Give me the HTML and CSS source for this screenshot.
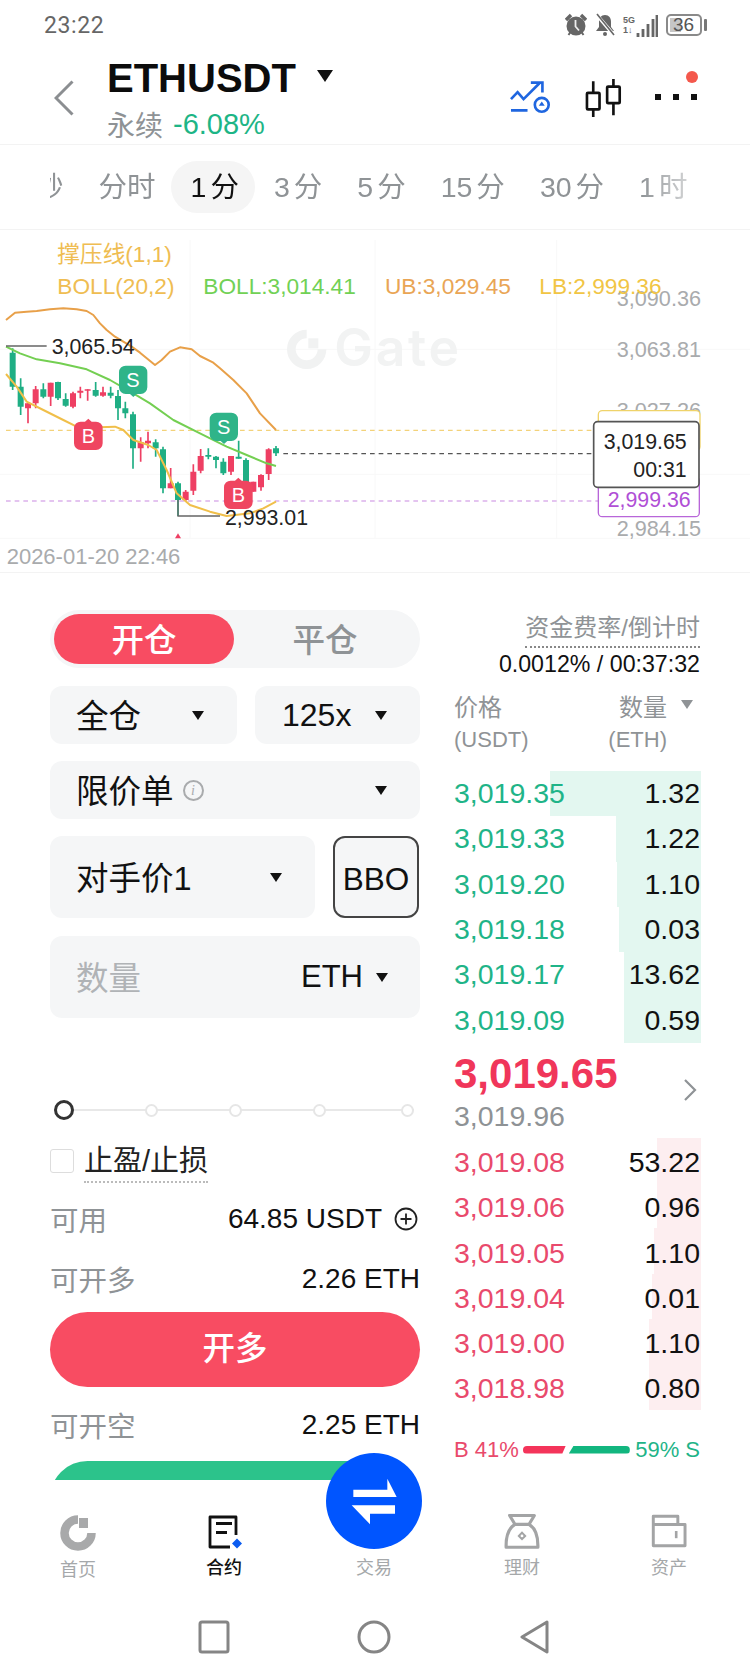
FILE: index.html
```html
<!DOCTYPE html>
<html lang="zh">
<head>
<meta charset="utf-8">
<title>ETHUSDT</title>
<link rel="stylesheet" href="styles.css">
</head>
<body>
<div class="page">
  <div class="status">
    <span class="time">23:22</span>
    <div class="status-icons">
      <svg class="ic-alarm" viewBox="0 0 22 24"><circle cx="11" cy="13" r="9.5" fill="#666"/><path d="M1 7l5-5M21 7l-5-5" stroke="#666" stroke-width="3.4" fill="none"/><path d="M3.5 22l2-3M18.5 22l-2-3" stroke="#666" stroke-width="2"/><path d="M10.5 7v6.5l3.5 4" stroke="#eee" stroke-width="1.8" fill="none"/></svg>
      <svg class="ic-bell" viewBox="0 0 20 24"><path d="M10 2c-4 0-6 3-6 7v5l-3 4h18l-3-4V9c0-4-2-7-6-7z" fill="#666"/><circle cx="10" cy="21" r="2" fill="#666"/><path d="M1 1l18 21" stroke="#fff" stroke-width="3.5"/><path d="M2 1l17 21" stroke="#666" stroke-width="1.6"/></svg>
      <div class="net"><span class="net-5g">5G</span><span class="net-arrows">1↓</span></div>
      <svg class="ic-bars" viewBox="0 0 22 24"><path d="M2 24v-4M7 24v-8M12 24v-13M17 24V6M21 24V2" stroke="#666" stroke-width="2.800"/></svg>
      <div class="battery"><span class="battery-level">36</span></div>
      <span class="battery-nub"></span>
    </div>
  </div>

  <header class="header">
    <svg class="back" viewBox="0 0 20 36"><path d="M18.500 1.500L2 18l16.500 16.500" fill="none" stroke="#8b8e91" stroke-width="3"/></svg>
    <div class="title-col">
      <div class="title-line"><span class="title">ETHUSDT</span><span class="caret caret-title"></span></div>
      <div class="sub-line"><span class="sub-kind">永续</span><span class="sub-pct">-6.08%</span></div>
    </div>
    <div class="header-icons">
      <svg class="ic-blue" viewBox="20 55 145 110"><path d="M32 118l20-21 18 21 48-48M92 68h35v30M32 152h50" fill="none" stroke="#1f66e0" stroke-width="8"/><circle cx="125" cy="135" r="21" fill="none" stroke="#1f66e0" stroke-width="8"/><path d="M125 125l9 13h-18z" fill="#1f66e0"/></svg>
      <svg class="ic-candle" viewBox="245 50 130 125"><path d="M279 62v35M279 147v23M340 55v23M340 128v37" stroke="#111" stroke-width="8"/><rect x="260" y="97" width="38" height="50" rx="3" fill="none" stroke="#111" stroke-width="8"/><rect x="321" y="78" width="38" height="50" rx="3" fill="none" stroke="#111" stroke-width="8"/></svg>
      <div class="more">
        <span class="more-dot"></span><span class="more-dot"></span><span class="more-dot"></span>
        <span class="more-badge"></span>
      </div>
    </div>
  </header>

  <nav class="tabs">
    <div class="tabs-track">
      <span class="tab tab-first">秒</span>
      <span class="tab">分时</span>
      <span class="tab tab-active"><b>1</b>分</span>
      <span class="tab"><b>3</b>分</span>
      <span class="tab"><b>5</b>分</span>
      <span class="tab"><b>15</b>分</span>
      <span class="tab"><b>30</b>分</span>
      <span class="tab"><b>1</b>时</span>
    </div>
  </nav>

  <section class="chart">
    <svg class="chart-svg" viewBox="0 0 2250 1026">
      <path class="grid" d="M0 358H2250M0 733H2250M0 925H2250M570 30V925M1125 30V925M1670 30V925"/>
      <g class="wm">
        <path d="M920 312a46 46 0 1 0 46 46" fill="none" stroke="#f1f2f2" stroke-width="26"/>
        <rect x="925" y="325" width="30" height="30" fill="#f1f2f2"/>
        <text class="wm-text" x="1003" y="408">Gate</text>
      </g>
      <text class="t-legend c-yel" x="172" y="97">撑压线(1,1)</text>
      <text class="t-legend c-yel" x="172" y="193">BOLL(20,2)</text>
      <text class="t-legend c-grn" x="610" y="193">BOLL:3,014.41</text>
      <text class="t-legend c-org" x="1155" y="193">UB:3,029.45</text>
      <text class="t-axis" x="2103" y="229">3,090.36</text>
      <text class="t-legend c-lb" x="1618" y="193">LB:2,999.36</text>
      <text class="t-axis" x="2103" y="382">3,063.81</text>
      <text class="t-axis" x="2103" y="564">3,027.26</text>
      <text class="t-axis" x="2103" y="917">2,984.15</text>
      <path class="dash dash-y" d="M18 601H1795"/>
      <path class="dash dash-p" d="M18 813H1795"/>
      <path class="dash dash-k" d="M850 671H1780"/>
      <rect class="box-y" x="1795" y="542" width="305" height="120" rx="12"/>
      <rect class="box-p" x="1795" y="740" width="303" height="120" rx="12"/>
      <text class="t-purple" x="2072" y="832">2,999.36</text>
      <path class="w-g" d="M38 355V480M62 445V555M130 460V505M174 455V510M197 490V530M287 456V500M332 470V505M354 480V570M376 515V565M399 545V716M467 628V680M489 650V790M534 755V858M625 655V688M648 678V715M670 685V735M716 632V686M738 685V775M828 648V678"/>
      <path class="b-g" d="M38 368V470M62 470V530M130 478V500M174 456V505M197 507V527M287 480V497M332 488V497M354 498V535M376 535V550M399 553V655M467 637V655M489 658V775M534 760V810M625 675V680M648 680V690M670 695V730M716 680V686M738 690V760M828 655V670"/>
      <path class="w-r" d="M84 520V580M107 468V535M152 458V528M219 485V535M241 470V505M263 478V512M309 470V500M422 622V695M444 605V655M512 714V775M557 780V815M580 703V795M602 657V730M693 678V735M760 755V785M783 733V782M806 655V750"/>
      <path class="b-r" d="M84 520V535M107 478V520M152 458V500M219 490V530M241 482V488M263 478V482M309 487V497M422 636V655M444 632V640M512 760V775M557 785V810M580 725V782M602 678V722M693 678V725M760 755V785M783 735V772M806 658V732"/>
      <path class="l-org" d="M18 270L45 248 80 245 110 243 150 238 190 235 230 238 260 243 280 255 300 280 320 300 345 320 370 335 395 350 420 368 465 405 485 390 510 365 540 352 575 358 600 378 640 398 660 415 700 450 740 490 780 550 828 600"/>
      <path class="l-grn" d="M18 350L60 370 110 388 180 400 260 418 330 450 400 490 450 520 520 570 600 610 680 650 740 675 800 700 828 708"/>
      <path class="l-yel" d="M18 432L50 470 80 515 130 540 190 570 230 590 300 592 345 590 370 600 400 630 445 645 470 660 485 690 500 720 530 790 570 825 630 845 680 858 750 850 790 835 828 815"/>
      <path class="hl" d="M18 348H140M534 810V858H660"/>
      <text class="t-ext" x="155" y="373">3,065.54</text>
      <text class="t-ext" x="675" y="885">2,993.01</text>
      <path class="tri-r" d="M534 910l9 15h-18z"/>
      <g>
        <path class="mk-g" d="M377 407h45a20 20 0 0 1 20 20v45a20 20 0 0 1-20 20h-12l-10 9-10-9h-13a20 20 0 0 1-20-20v-45a20 20 0 0 1 20-20z"/>
        <text class="t-mk" x="399" y="472">S</text>
        <path class="mk-g" d="M649 548h45a20 20 0 0 1 20 20v45a20 20 0 0 1-20 20h-12l-10 9-10-9h-13a20 20 0 0 1-20-20v-45a20 20 0 0 1 20-20z"/>
        <text class="t-mk" x="671" y="613">S</text>
        <path class="mk-r" d="M242 575h13l10-9 10 9h13a20 20 0 0 1 20 20v45a20 20 0 0 1-20 20h-46a20 20 0 0 1-20-20v-45a20 20 0 0 1 20-20z"/>
        <text class="t-mk" x="265" y="640">B</text>
        <path class="mk-r" d="M692 752h13l10-9 10 9h13a20 20 0 0 1 20 20v45a20 20 0 0 1-20 20h-46a20 20 0 0 1-20-20v-45a20 20 0 0 1 20-20z"/>
        <text class="t-mk" x="715" y="816">B</text>
      </g>
      <rect class="box-k" x="1781" y="575" width="316" height="197" rx="12"/>
      <text class="t-price" x="2060" y="657">3,019.65</text>
      <text class="t-price" x="2060" y="741">00:31</text>
      <text class="t-date" x="20" y="1003">2026-01-20 22:46</text>
    </svg>
  </section>

  <main class="trade">
    <div class="form">
      <div class="segment">
        <span class="seg seg-active">开仓</span>
        <span class="seg">平仓</span>
      </div>
      <div class="row-split">
        <div class="select select-mode"><span class="cjk">全仓</span><span class="caret"></span></div>
        <div class="select select-lev"><span>125x</span><span class="caret"></span></div>
      </div>
      <div class="select select-type">
        <span class="with-info"><span class="cjk">限价单</span><span class="info">i</span></span><span class="caret"></span>
      </div>
      <div class="row-price">
        <div class="select select-tall select-price"><span class="cjk">对手价1</span><span class="caret"></span></div>
        <div class="bbo">BBO</div>
      </div>
      <div class="select select-tall select-qty">
        <span class="placeholder cjk">数量</span>
        <span class="unit">ETH<span class="caret"></span></span>
      </div>
      <div class="slider">
        <span class="knob"></span><span class="stop"></span><span class="stop"></span><span class="stop"></span><span class="stop stop-last"></span>
      </div>
      <div class="tpsl">
        <span class="check"></span><span class="tpsl-label">止盈/止损</span>
      </div>
      <div class="kv kv-avail"><span class="k">可用</span><span class="v">64.85 USDT<svg class="ic-plus" viewBox="0 0 24 24"><circle cx="12" cy="12" r="10.500" fill="none" stroke="#222" stroke-width="1.800"/><path d="M12 6.500v11M6.500 12h11" stroke="#222" stroke-width="1.800"/></svg></span></div>
      <div class="kv"><span class="k">可开多</span><span class="v">2.26 ETH</span></div>
      <div class="action action-long">开多</div>
      <div class="kv kv-short"><span class="k">可开空</span><span class="v">2.25 ETH</span></div>
      <div class="action action-short"></div>
    </div>

    <aside class="book">
      <div class="funding"><span class="funding-label">资金费率/倒计时</span></div>
      <div class="funding-value">0.0012% / 00:37:32</div>
      <div class="book-head">
        <div class="book-head-col"><span>价格</span><span class="unit-line">(USDT)</span></div>
        <div class="book-head-col book-head-qty"><span class="qty-head">数量<span class="caret caret-gray"></span></span><span class="unit-line">(ETH)</span></div>
      </div>
      <div class="rows">
        <div class="bk bk-up"><i class="bar" style="width:151px"></i><span class="p">3,019.35</span><span class="q">1.32</span></div>
        <div class="bk bk-up"><i class="bar" style="width:85px"></i><span class="p">3,019.33</span><span class="q">1.22</span></div>
        <div class="bk bk-up"><i class="bar" style="width:84px"></i><span class="p">3,019.20</span><span class="q">1.10</span></div>
        <div class="bk bk-up"><i class="bar" style="width:82px"></i><span class="p">3,019.18</span><span class="q">0.03</span></div>
        <div class="bk bk-up"><i class="bar" style="width:77px"></i><span class="p">3,019.17</span><span class="q">13.62</span></div>
        <div class="bk bk-up"><i class="bar" style="width:77px"></i><span class="p">3,019.09</span><span class="q">0.59</span></div>
      </div>
      <div class="mid">
        <div class="mid-prices"><span class="mid-last">3,019.65</span><span class="mid-mark">3,019.96</span></div>
        <svg class="mid-chev" viewBox="0 0 14 24"><path d="M2 2l10 10L2 22" fill="none" stroke="#8f9396" stroke-width="2.200"/></svg>
      </div>
      <div class="rows">
        <div class="bk bk-dn"><i class="bar" style="width:44px"></i><span class="p">3,019.08</span><span class="q">53.22</span></div>
        <div class="bk bk-dn"><i class="bar" style="width:44px"></i><span class="p">3,019.06</span><span class="q">0.96</span></div>
        <div class="bk bk-dn"><i class="bar" style="width:47px"></i><span class="p">3,019.05</span><span class="q">1.10</span></div>
        <div class="bk bk-dn"><i class="bar" style="width:49px"></i><span class="p">3,019.04</span><span class="q">0.01</span></div>
        <div class="bk bk-dn"><i class="bar" style="width:52px"></i><span class="p">3,019.00</span><span class="q">1.10</span></div>
        <div class="bk bk-dn"><i class="bar" style="width:52px"></i><span class="p">3,018.98</span><span class="q">0.80</span></div>
      </div>
      <div class="ratio">
        <span class="ratio-b">B 41%</span>
        <span class="ratio-bar ratio-bar-b"></span>
        <span class="ratio-bar ratio-bar-s"></span>
        <span class="ratio-s">59% S</span>
      </div>
    </aside>
  </main>

  <footer class="tabbar">
    <div class="swap">
      <svg viewBox="858 8 288 288"><path fill="#fff" d="M940 118h102V85l28 55H940zM1065 165H935l55 57v-32h75z"/></svg>
    </div>
    <div class="nav-item nav-home">
      <svg class="nav-ic" viewBox="0 0 36 36"><path d="M18 4.500a13.500 13.500 0 1 0 13.500 13.500" fill="none" stroke="#a8a9aa" stroke-width="8.500"/><rect x="19" y="3" width="9" height="10" fill="#a8a9aa"/></svg>
      <span class="nav-label">首页</span>
    </div>
    <div class="nav-item nav-active">
      <svg class="nav-ic" viewBox="0 0 36 36"><path d="M30 22V4H4v30h20" fill="none" stroke="#111" stroke-width="2.800" stroke-linejoin="round"/><path d="M10 10.500h16M10 19.500h11" stroke="#111" stroke-width="2.800"/><path d="M31 25.500l5 5-5 5-5-5z" fill="#0b5cf0"/></svg>
      <span class="nav-label">合约</span>
    </div>
    <div class="nav-item">
      <span class="nav-spacer"></span>
      <span class="nav-label">交易</span>
    </div>
    <div class="nav-item">
      <svg class="nav-ic" viewBox="45 38 100 102"><path d="M60 45h70l-15 25H75z M75 70Q50 85 50 130v5h90v-5q0-45-25-60" fill="none" stroke="#a3a4a5" stroke-width="9" stroke-linejoin="round"/><path d="M95 90l13 13-13 13-13-13z" fill="#a3a4a5"/><circle cx="95" cy="103" r="4" fill="#fff"/></svg>
      <span class="nav-label">理财</span>
    </div>
    <div class="nav-item">
      <svg class="nav-ic" viewBox="488 40 110 100"><path d="M495 135V45h75v25h22v65zM495 70h75" fill="none" stroke="#a3a4a5" stroke-width="9" stroke-linejoin="round"/><path d="M565 90v22" stroke="#a3a4a5" stroke-width="8"/></svg>
      <span class="nav-label">资产</span>
    </div>
  </footer>

  <div class="sysnav">
    <svg class="sys-ic" viewBox="0 0 34 34"><rect x="3" y="2" width="28" height="30" rx="2" fill="none" stroke="#858585" stroke-width="3"/></svg>
    <svg class="sys-ic" viewBox="0 0 34 34"><circle cx="17" cy="17" r="15" fill="none" stroke="#858585" stroke-width="3"/></svg>
    <svg class="sys-ic" viewBox="0 0 34 34"><path d="M30 2L5 17l25 15z" fill="none" stroke="#858585" stroke-width="3" stroke-linejoin="round"/></svg>
  </div>
</div>
</body>
</html>
```
FILE: styles.css
```css
* { box-sizing: border-box; }
html, body { margin: 0; padding: 0; background: #fff; }
body { font-family: "Liberation Sans", "Noto Sans CJK SC", sans-serif; color: #111; }
.page { position: relative; width: 750px; height: 1680px; overflow: hidden; }

/* status bar */
.status { height: 50px; display: flex; align-items: center; justify-content: space-between; padding: 0 43px 0 44px; }
.time { font-family: Roboto, "Liberation Sans", sans-serif; font-size: 23px; letter-spacing: .6px; color: #666; }
.status-icons { display: flex; align-items: center; height: 24px; }
.ic-alarm { width: 22px; height: 24px; margin-right: 8px; }
.ic-bell { width: 20px; height: 24px; margin-right: 8px; }
.net { display: flex; flex-direction: column; width: 13px; margin-right: 0; line-height: 10px; font-size: 9px; font-weight: 700; color: #666; }
.net-5g, .net-arrows { white-space: nowrap; }
.ic-bars { width: 22px; height: 24px; margin-right: 8px; }
.battery { width: 36px; height: 22px; border: 2px solid #8a8a8a; border-radius: 5px; padding: 2px; display: flex; background: #fff; }
.battery-level { flex: 1; font-size: 19px; line-height: 14px; padding-left: 3px; color: #555; background: linear-gradient(90deg, #c6c6c6 38%, #fff 38%); }
.battery-nub { width: 3px; height: 12px; margin-left: 2px; background: #777; border-radius: 1px; }

/* header */
.header { height: 95px; border-bottom: 1px solid #f3f3f3; display: flex; align-items: flex-start; padding: 0 53px 0 54px; }
.back { width: 20px; height: 36px; margin-top: 30px; flex: none; }
.title-col { margin-left: 33px; }
.title-line { display: flex; align-items: center; height: 46px; margin-top: 5px; }
.title { font-size: 40px; font-weight: 700; line-height: 46px; color: #0c0c0c; }
.caret { display: inline-block; width: 0; height: 0; border-left: 6.500px solid transparent; border-right: 6.500px solid transparent; border-top: 9px solid #111; }
.caret-title { margin-left: 21px; margin-top: -4px; border-left-width: 8px; border-right-width: 8px; border-top-width: 12px; }
.sub-line { display: flex; align-items: center; height: 36px; margin-top: 5px; }
.sub-kind { font-size: 28px; color: #8e9295; }
.sub-pct { font-size: 29px; color: #1db586; margin-left: 10px; }
.header-icons { margin-left: auto; display: flex; align-items: flex-start; }
.ic-blue { width: 48px; height: 37px; margin-top: 28px; }
.ic-candle { width: 43px; height: 42px; margin-top: 27px; margin-left: 27px; }
.more { position: relative; display: flex; gap: 12px; margin-top: 44px; margin-left: 30px; width: 42px; }
.more-dot { width: 6px; height: 6px; background: #111; }
.more-badge { position: absolute; right: -1px; top: -23px; width: 12px; height: 12px; border-radius: 50%; background: #f4584c; }

/* interval tabs */
.tabs { height: 85px; border-bottom: 1px solid #f3f3f3; padding-left: 50px; display: flex; align-items: center; }
.tabs-track { width: 642px; height: 52px; display: flex; align-items: center; gap: 35px; overflow: hidden; white-space: nowrap; -webkit-mask-image: linear-gradient(90deg, #fff 92%, rgba(255,255,255,.35)); mask-image: linear-gradient(90deg, #fff 92%, rgba(255,255,255,.35)); }
.tab { flex: none; font-size: 28.500px; line-height: 52px; color: #8f9396; }
.tab b { font-weight: 400; margin-right: 4px; }
.tab-first { margin-left: -15px; }
.tab-active { color: #111; background: #f5f5f5; border-radius: 26px; padding: 0 16px 0 20px; margin: 0 -16px 0 -20px; }

/* chart */
.chart { height: 343px; border-bottom: 1px solid #f3f3f3; }
.chart-svg { display: block; width: 750px; height: 342px; }
.grid { stroke: #f8f8f8; stroke-width: 3; fill: none; }
.wm-text { font-family: Inter, "Liberation Sans", sans-serif; font-weight: 600; font-size: 155px; letter-spacing: 8px; fill: #f2f3f3; }
.t-legend { font-size: 68px; }
.c-yel { fill: #efbd52; }
.c-grn { fill: #71d155; }
.c-org { fill: #e9a555; }
.c-lb { fill: #f1c544; }
.t-axis { font-size: 65px; fill: #a9abad; text-anchor: end; }
.t-ext { font-size: 64px; fill: #222; }
.t-date { font-size: 66px; fill: #a9abad; }
.t-price { font-size: 64px; fill: #222; text-anchor: end; }
.t-purple { font-size: 64px; fill: #b04fd6; text-anchor: end; }
.t-mk { font-size: 60px; fill: #fff; text-anchor: middle; }
.dash { fill: none; stroke-width: 3.500; stroke-dasharray: 14 12; }
.dash-y { stroke: #f3d27a; }
.dash-p { stroke: #c98ae2; }
.dash-k { stroke: #555; }
.box-y { fill: #fff; stroke: #efd36a; stroke-width: 4; }
.box-p { fill: #fff; stroke: #b866d9; stroke-width: 4; }
.box-k { fill: #fff; stroke: #555; stroke-width: 5; }
.w-g { stroke: #1fae84; stroke-width: 5; fill: none; }
.b-g { stroke: #1fae84; stroke-width: 18; fill: none; }
.w-r { stroke: #ee3f63; stroke-width: 5; fill: none; }
.b-r { stroke: #ee3f63; stroke-width: 18; fill: none; }
.l-org { fill: none; stroke: #e8a049; stroke-width: 6; stroke-linejoin: round; }
.l-grn { fill: none; stroke: #74cf52; stroke-width: 6; stroke-linejoin: round; }
.l-yel { fill: none; stroke: #f0bf4a; stroke-width: 6; stroke-linejoin: round; }
.hl { fill: none; stroke: #666; stroke-width: 4; }
.tri-r { fill: #ee3f63; }
.mk-g { fill: #2fb489; }
.mk-r { fill: #ef4560; }

/* trade area */
.trade { height: 907px; overflow: hidden; display: flex; padding-left: 50px; }
.form { width: 370px; flex: none; padding-top: 37px; display: flex; flex-direction: column; }
.form > * { flex: none; }
.segment { height: 58px; padding: 4px; background: #f5f6f7; border-radius: 29px; display: flex; }
.seg { flex: 1; height: 50px; font-size: 32.500px; line-height: 54px; text-align: center; color: #8f9396; font-weight: 500; }
.seg-active { flex: none; width: 180px; background: #f84c62; color: #fff; border-radius: 25px; }
.row-split { display: flex; gap: 18px; margin-top: 18px; }
.select { height: 58px; background: #f5f6f7; border-radius: 12px; display: flex; align-items: center; justify-content: space-between; padding: 0 33px 0 26px; font-size: 32.500px; color: #111; }
.cjk { margin-bottom: 4px; }
.select-mode { width: 187px; }
.select-lev { width: 165px; padding-left: 27px; font-size: 32px; }
.select-type { margin-top: 17px; }
.with-info { display: flex; align-items: center; }
.info { width: 21px; height: 21px; margin-left: 9px; border: 2px solid #a9abad; border-radius: 50%; font: italic 14px/17px "Liberation Serif", serif; text-align: center; color: #a9abad; }
.row-price { display: flex; gap: 18px; margin-top: 17px; }
.select-tall { height: 82px; }
.select-price { width: 265px; }
.bbo { width: 86px; height: 82px; background: #f5f6f7; border: 2px solid #444; border-radius: 12px; font-size: 31.500px; line-height: 82px; text-align: center; color: #111; white-space: nowrap; }
.select-qty { margin-top: 18px; padding-right: 32px; }
.placeholder { color: #b0b3b6; }
.unit { display: flex; align-items: center; gap: 13px; font-size: 31px; }
.slider { display: flex; align-items: center; gap: 71px; height: 22px; margin-top: 81px; padding: 0 6px 0 4px; background: linear-gradient(#e8e8e8, #e8e8e8) center / 100% 2px no-repeat; background-origin: content-box; }
.knob { flex: none; width: 20px; height: 20px; border: 3.500px solid #333; border-radius: 50%; background: #fff; }
.stop { flex: none; width: 13px; height: 13px; border: 2px solid #e6e6e6; border-radius: 50%; background: #fff; }
.stop-last { margin-left: auto; }
.tpsl { display: flex; align-items: flex-start; margin-top: 26px; height: 36px; }
.check { width: 24px; height: 24px; margin-top: 2px; border: 1.500px solid #ddd; border-radius: 3px; }
.tpsl-label { margin-left: 10px; font-size: 29px; line-height: 28px; height: 36px; color: #222; border-bottom: 2px dotted #bbb; }
.kv { display: flex; justify-content: space-between; align-items: center; height: 44px; }
.kv-avail { margin-top: 14px; margin-bottom: 16px; }
.k { font-size: 28.500px; color: #8f9396; margin-bottom: 2px; }
.v { display: flex; align-items: center; font-size: 28px; color: #111; }
.ic-plus { width: 24px; height: 24px; margin-left: 12px; margin-right: 2px; }
.action { height: 75px; border-radius: 37.500px; font-size: 32.500px; font-weight: 500; line-height: 75px; text-align: center; color: #fff; }
.action-long { background: #f84c62; margin-top: 11px; }
.kv-short { margin-top: 16px; }
.action-short { background: #2cc38b; margin-top: 14px; }

/* order book */
.book { width: 246px; flex: none; margin-left: 34px; padding-top: 40px; }
.funding { text-align: right; height: 35px; }
.funding-label { display: inline-block; height: 35px; font-size: 24px; line-height: 30px; color: #8f9396; border-bottom: 2px dotted #888; }
.funding-value { height: 32px; font-size: 23.200px; line-height: 32px; text-align: right; color: #111; white-space: nowrap; }
.book-head { display: flex; justify-content: space-between; margin-top: 12px; height: 79px; color: #8f9396; }
.book-head-col { display: flex; flex-direction: column; font-size: 24px; line-height: 32px; }
.book-head-qty { align-items: flex-end; padding-right: 33px; position: relative; }
.qty-head { position: relative; }
.caret-gray { position: absolute; left: 100%; top: 8px; margin-left: 14px; border-top-color: #8f9396; }
.unit-line { font-size: 22px; line-height: 31px; }
.rows { display: flex; flex-direction: column; }
.bk { position: relative; height: 45.300px; display: flex; justify-content: space-between; align-items: center; font-size: 28.500px; }
.bar { position: absolute; top: 0; bottom: 0; right: -1px; }
.bk-up .bar { background: #e3f7f0; }
.bk-dn .bar { background: #fdeef0; }
.p, .q { position: relative; }
.bk-dn .p, .bk-dn .q { top: 2px; }
.bk-up .p { color: #1fb488; }
.bk-dn .p { color: #e94a6c; }
.q { color: #111; }
.mid { display: flex; align-items: center; justify-content: space-between; height: 95px; padding-right: 3px; }
.mid-prices { display: flex; flex-direction: column; padding-top: 5px; }
.mid-last { font-size: 42px; font-weight: 700; line-height: 48px; color: #f0365a; }
.mid-mark { font-size: 28.500px; line-height: 37px; color: #8e9295; }
.mid-chev { width: 14px; height: 24px; }
.ratio { display: flex; align-items: center; height: 24px; margin-top: 28px; font-size: 22px; white-space: nowrap; }
.ratio-b { color: #e94a6c; margin-right: 4px; }
.ratio-s { color: #1fb488; margin-left: auto; }
.ratio-bar { display: block; height: 8px; border-radius: 4px 0 0 4px; }
.ratio-bar-b { width: 43px; background: #f4345a; clip-path: polygon(0 0, 100% 0, 92% 100%, 0 100%); }
.ratio-bar-s { width: 61px; margin-left: 3px; background: #12b67f; border-radius: 0 4px 4px 0; clip-path: polygon(8% 0, 100% 0, 100% 100%, 0 100%); }

/* bottom tabs */
.tabbar { position: relative; height: 120px; background: #fff; display: grid; grid-template-columns: 156px 136px 164px 132px 162px; padding-top: 33px; }
.swap { position: absolute; left: 326px; top: -27px; width: 96px; height: 96px; border-radius: 50%; background: #0055ff; z-index: 2; }
.swap svg { display: block; width: 96px; height: 96px; }
.nav-item { display: flex; flex-direction: column; align-items: center; }
.nav-home { padding-top: 2px; }
.nav-ic, .nav-spacer { display: block; width: 36px; height: 36px; }
.nav-label { font-size: 18px; line-height: 24px; margin-top: 7px; color: #a5a8aa; }
.nav-active .nav-label { color: #111; font-weight: 500; }

/* system nav */
.sysnav { height: 80px; display: flex; gap: 126px; padding: 20px 0 0 197px; }
.sys-ic { width: 34px; height: 34px; }
```
